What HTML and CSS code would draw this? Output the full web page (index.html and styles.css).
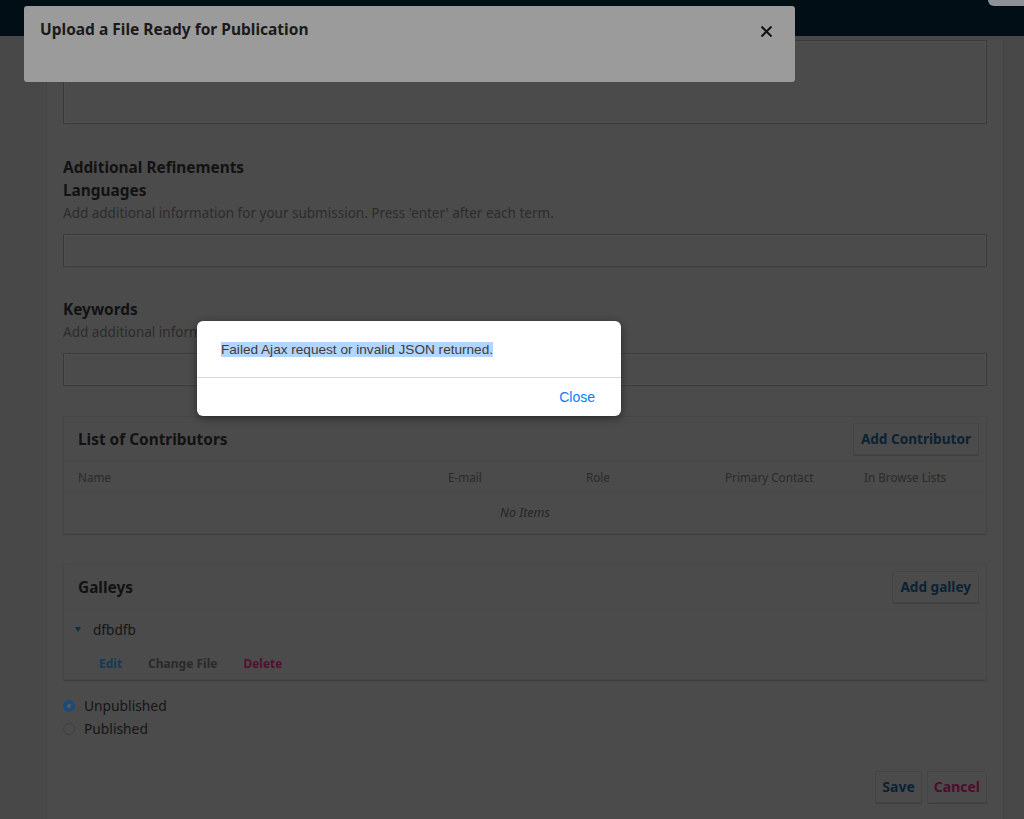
FILE: index.html
```html
<!DOCTYPE html>
<html lang="en">
<head>
  <meta charset="UTF-8">
  <title>Upload a File Ready for Publication</title>
  <link rel="stylesheet" href="styles.css">
</head>
<body>

  <div class="topbar"></div>
  <div class="corner-tab"></div>

  <div class="sheet">
    <div class="textarea"></div>

    <div class="field first">
      <div class="section-title">Additional Refinements</div>
      <div class="label">Languages</div>
      <div class="help">Add additional information for your submission. Press 'enter' after each term.</div>
      <div class="input"></div>
    </div>

    <div class="field">
      <div class="label">Keywords</div>
      <div class="help">Add additional information for your submission. Press 'enter' after each term.</div>
      <div class="input"></div>
    </div>

    <div class="panel contributors">
      <div class="panel-head">
        <span class="panel-title">List of Contributors</span>
        <span class="btn">Add Contributor</span>
      </div>
      <div class="cols">
        <span class="c-name">Name</span>
        <span class="c-mail">E-mail</span>
        <span class="c-role">Role</span>
        <span class="c-primary">Primary Contact</span>
        <span class="c-browse">In Browse Lists</span>
      </div>
      <div class="empty">No Items</div>
    </div>

    <div class="panel galleys">
      <div class="panel-head">
        <span class="panel-title">Galleys</span>
        <span class="btn">Add galley</span>
      </div>
      <div class="galley-row">
        <span class="caret"></span>
        <span>dfbdfb</span>
      </div>
      <div class="galley-actions">
        <span class="act-edit">Edit</span>
        <span class="act-change">Change File</span>
        <span class="act-delete">Delete</span>
      </div>
    </div>

    <div class="radios">
      <label class="radio"><span class="dot on"></span>Unpublished</label>
      <label class="radio"><span class="dot"></span>Published</label>
    </div>

    <div class="form-buttons">
      <span class="btn">Save</span>
      <span class="btn cancel">Cancel</span>
    </div>
  </div>

  <div class="modal-header">
    <span class="modal-title">Upload a File Ready for Publication</span>
    <svg class="close-x" width="11" height="11" viewBox="0 0 11 11">
      <path d="M1.2 1.2 L9.8 9.8 M9.8 1.2 L1.2 9.8" stroke="#111" stroke-width="2" stroke-linecap="square"/>
    </svg>
  </div>

  <div class="alert">
    <div class="alert-body"><span class="selected">Failed Ajax request or invalid JSON returned.</span></div>
    <div class="alert-foot"><span class="alert-close">Close</span></div>
  </div>

</body>
</html>
```

FILE: styles.css
```css
body {
  margin: 0;
  height: 819px;
  overflow: hidden;
  background-color: #484848;
  font-family: 'Noto Sans', sans-serif;
  color: #121212;
}

.topbar {
  height: 36px;
  background-color: #020e16;
}

.corner-tab {
  position: absolute;
  top: -6px;
  left: 988px;
  width: 50px;
  height: 12px;
  border-radius: 6px;
  background-color: #8e9296;
}

.sheet {
  margin-left: 46px;
  width: 924px;
  height: 783px;
  padding: 0 16px;
  background-color: #4b4b4b;
  border-left: 1px solid #444;
  border-right: 1px solid #434343;
}

.textarea {
  height: 82px;
  margin-top: 4px;
  border: 1px solid #3a3a3a;
  box-shadow: inset 0 0 0 1px #505050;
}

.field {
  margin-top: 31px;
}

.field.first {
  margin-top: 32px;
}

.section-title,
.label {
  font-size: 15.4px;
  font-weight: bold;
  line-height: 23px;
}

.help {
  font-size: 13.5px;
  line-height: 23px;
  color: #2c2c2c;
}

.input {
  height: 31px;
  margin-top: 9px;
  border: 1px solid #3a3a3a;
  box-shadow: inset 0 0 0 1px #505050;
}

.panel {
  border: 1px solid #464646;
  border-radius: 2px;
  box-shadow: 0 1px 1px #3e3e3e;
}

.contributors {
  margin-top: 30px;
}

.galleys {
  margin-top: 30px;
}

.panel-head {
  display: flex;
  justify-content: space-between;
  align-items: center;
  height: 44px;
  padding: 0 7px 0 14px;
  border-bottom: 1px solid #474747;
}

.panel-title {
  font-size: 15.4px;
  font-weight: bold;
}

.btn {
  display: inline-block;
  padding: 0 7px;
  height: 30px;
  line-height: 30px;
  font-size: 13.6px;
  font-weight: bold;
  color: #0b2233;
  border: 1px solid #444;
  border-radius: 2px;
  box-shadow: 0 1px 0 #3f3f3f;
}

.cols {
  display: flex;
  height: 30px;
  align-items: center;
  font-size: 11.7px;
  color: #2a2a2a;
  border-bottom: 1px solid #474747;
}

.c-name { margin-left: 14px; width: 370px; }
.c-mail { width: 138px; }
.c-role { width: 139px; }
.c-primary { width: 139px; }

.empty {
  height: 40px;
  line-height: 40px;
  text-align: center;
  font-size: 12.5px;
  font-style: italic;
  color: #262626;
}

.galley-row {
  display: flex;
  align-items: center;
  height: 36px;
  padding-top: 1px;
  padding-left: 11px;
  font-size: 13.6px;
  color: #151515;
}

.caret {
  width: 0;
  height: 0;
  margin-right: 12px;
  border-left: 3.5px solid transparent;
  border-right: 3.5px solid transparent;
  border-top: 5px solid #0f2f45;
}

.galley-actions {
  display: flex;
  gap: 26px;
  height: 31px;
  margin-top: 1px;
  align-items: center;
  padding-left: 35px;
  font-size: 12px;
  font-weight: bold;
}

.act-edit { color: #143a55; }
.act-change { color: #2a2a2a; }
.act-delete { color: #52102f; }

.radios {
  margin-top: 14px;
}

.radio {
  display: flex;
  align-items: center;
  height: 23px;
  font-size: 13.8px;
  color: #151515;
}

.dot {
  width: 10px;
  height: 10px;
  margin-right: 9px;
  border: 1px solid #3e3e3e;
  border-radius: 50%;
}

.dot.on {
  background-color: #5a5a5a;
  border: 4px solid #1b4b7a;
  width: 4px;
  height: 4px;
}

.form-buttons {
  display: flex;
  justify-content: flex-end;
  gap: 5px;
  margin-top: 31px;
}

.form-buttons .btn {
  padding: 0 6px;
  font-size: 14px;
}

.btn.cancel {
  color: #4e0b2e;
}

.modal-header {
  position: absolute;
  top: 6px;
  left: 24px;
  width: 739px;
  height: 76px;
  padding: 0 16px;
  display: flex;
  justify-content: space-between;
  align-items: flex-start;
  background-color: #9b9b9b;
  border-radius: 3px;
}

.modal-title {
  margin-top: 12px;
  font-size: 15.5px;
  font-weight: bold;
  line-height: 22px;
  color: #1a1a1a;
}

.close-x {
  margin-top: 20px;
  margin-right: 7px;
}

.alert {
  position: absolute;
  top: 321px;
  left: 197px;
  width: 424px;
  background-color: #fff;
  border-radius: 6px;
  box-shadow: 0 2px 8px rgba(0, 0, 0, 0.45);
  font-family: 'Liberation Sans', Arial, sans-serif;
}

.alert-body {
  height: 57px;
  padding: 21px 24px 0;
  box-sizing: border-box;
  font-size: 13.6px;
  color: #3c3c3c;
  border-bottom: 1px solid #d8d8d8;
}

.selected {
  background-color: #b4d5fd;
}

.alert-foot {
  height: 38px;
  display: flex;
  justify-content: flex-end;
  align-items: center;
  padding-right: 26px;
}

.alert-close {
  font-size: 14px;
  color: #0a7bff;
}
```
